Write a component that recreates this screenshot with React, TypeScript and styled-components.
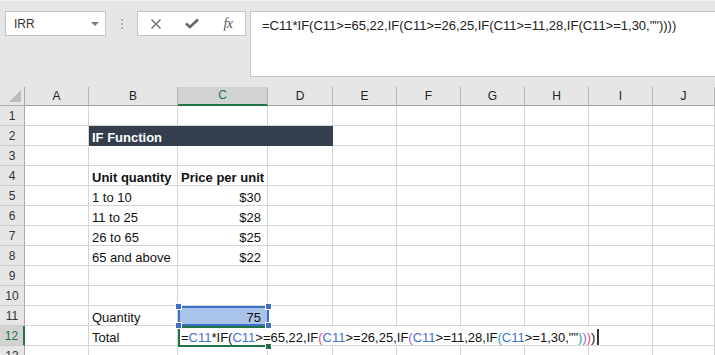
import React from "react"
import styled, { createGlobalStyle } from "styled-components"

const GlobalStyle = createGlobalStyle`
  html, body {
    margin: 0;
    padding: 0;
    background: #e6e6e6;
    overflow: hidden;
  }
  body {
    font-family: "Liberation Sans", Arial, sans-serif;
  }
`

const COL_IDS = ["A", "B", "C", "D", "E", "F", "G", "H", "I", "J"]
const COL_W = [64, 89, 90, 65, 64, 64, 64, 64, 64]
const HEAD_H = 19
const ROW_H = 20
const ROW_COUNT = 13

const colLeft = (i: number) => 25 + COL_W.slice(0, i).reduce((a, b) => a + b, 0)
const rowTop = (r: number) => HEAD_H + (r - 1) * ROW_H

const Page = styled.div`
  width: 715px;
  height: 355px;
  overflow: hidden;
`

const Toolbar = styled.div`
  display: flex;
  align-items: flex-start;
  height: 87px;
  box-sizing: border-box;
  padding: 10px 0 0 5px;
  border-top: 1px solid #f2f2f2;
`

const NameBox = styled.div`
  width: 101px;
  height: 25px;
  box-sizing: border-box;
  background: #fff;
  border: 1px solid #c6c6c6;
  display: flex;
  align-items: center;
  justify-content: space-between;
  padding: 0 6px 0 8px;
  font-size: 12px;
  color: #333;
`

const Caret = styled.span`
  width: 0;
  height: 0;
  border-left: 4px solid transparent;
  border-right: 4px solid transparent;
  border-top: 4px solid #7a7a7a;
`

const Grip = styled.div`
  width: 31px;
  height: 25px;
  display: flex;
  flex-direction: column;
  align-items: center;
  justify-content: center;
  gap: 2px;

  span {
    width: 2px;
    height: 2px;
    background: #b4b4b4;
  }
`

const FxBox = styled.div`
  width: 109px;
  height: 25px;
  box-sizing: border-box;
  background: #fff;
  border: 1px solid #c6c6c6;
  display: grid;
  grid-template-columns: repeat(3, 36px);
  align-items: center;
  justify-items: center;
`

const FxLabel = styled.span`
  font-family: "Liberation Serif", "Times New Roman", serif;
  font-style: italic;
  font-size: 14px;
  color: #555;
  letter-spacing: -0.5px;
`

const FormulaBar = styled.div`
  flex: 1;
  height: 66px;
  margin-left: 4px;
  box-sizing: border-box;
  background: #fff;
  border: 1px solid #c6c6c6;
  border-right: none;
  padding: 6px 0 0 11px;
  font-size: 13px;
  line-height: 16px;
  color: #222;
  white-space: nowrap;
`

const Sheet = styled.div`
  position: relative;
  display: grid;
  grid-template-columns: 25px ${COL_W.map((w) => `${w}px`).join(" ")} 1fr;
  grid-template-rows: ${HEAD_H}px repeat(${ROW_COUNT}, ${ROW_H}px);
  background: #fff;
`

const Corner = styled.div`
  background: #e6e6e6;
  border-right: 1px solid #ababab;
  border-bottom: 1px solid #ababab;
  display: flex;
  align-items: flex-end;
  justify-content: flex-end;
  padding: 0 3px 3px 0;

  &::after {
    content: "";
    width: 0;
    height: 0;
    border-left: 12px solid transparent;
    border-bottom: 12px solid #bcbcbc;
  }
`

const ColHead = styled.div<{ $active?: boolean }>`
  background: ${(p) => (p.$active ? "#d2d2d2" : "#e6e6e6")};
  border-right: 1px solid #b4b4b4;
  border-bottom: ${(p) => (p.$active ? "2px solid #217346" : "1px solid #9f9f9f")};
  color: ${(p) => (p.$active ? "#217346" : "#222")};
  font-size: 12px;
  line-height: ${(p) => (p.$active ? 17 : 18)}px;
  text-align: center;
`

const RowHead = styled.div<{ $active?: boolean }>`
  background: ${(p) => (p.$active ? "#d2d2d2" : "#e6e6e6")};
  border-right: ${(p) => (p.$active ? "2px solid #217346" : "1px solid #ababab")};
  border-bottom: 1px solid #cdcdcd;
  color: ${(p) => (p.$active ? "#217346" : "#333")};
  font-size: 12px;
  line-height: 21px;
  text-align: center;
`

const Cell = styled.div<{
  $span?: number
  $bold?: boolean
  $right?: boolean
  $dark?: boolean
  $fill?: boolean
  $spill?: boolean
}>`
  grid-column: span ${(p) => p.$span || 1};
  box-sizing: border-box;
  display: flex;
  align-items: flex-end;
  justify-content: ${(p) => (p.$right ? "flex-end" : "flex-start")};
  padding: 0 ${(p) => (p.$right ? 6 : 3)}px 0 3px;
  border-right: 1px solid ${(p) => (p.$dark ? "#343e4c" : "#d4d4d4")};
  border-bottom: 1px solid ${(p) => (p.$dark ? "#343e4c" : "#d4d4d4")};
  background: ${(p) => (p.$dark ? "#343e4c" : p.$fill ? "#a9c3ea" : "#fff")};
  color: ${(p) => (p.$dark ? "#fff" : "#111")};
  font-size: 13px;
  font-weight: ${(p) => (p.$bold ? 700 : 400)};
  line-height: 14px;
  white-space: nowrap;
  overflow: ${(p) => (p.$spill ? "visible" : "hidden")};
`

const Ref = styled.span`
  color: #3f70d2;
`

const Paren = styled.span<{ $c: string }>`
  color: ${(p) => p.$c};
`

const Caretline = styled.span`
  display: inline-block;
  width: 2px;
  height: 16px;
  margin-left: 2px;
  background: #333;
  vertical-align: -3px;
`

const RangeBox = styled.div`
  position: absolute;
  box-sizing: border-box;
  border: 2px solid #3c6fc6;
  pointer-events: none;
`

const ActiveBox = styled.div`
  position: absolute;
  box-sizing: border-box;
  border: 2px solid #217346;
  border-right: none;
  pointer-events: none;
`

const Handle = styled.div<{ $green?: boolean }>`
  position: absolute;
  width: 5px;
  height: 5px;
  background: ${(p) => (p.$green ? "#217346" : "#3c6fc6")};
  outline: 1px solid #fff;
`

const PINK = "#de4c86"
const PURPLE = "#a064d8"
const TEAL = "#1ea8a0"

function FormulaText({ colored }: { colored?: boolean }) {
  if (!colored) {
    return <>{'=C11*IF(C11>=65,22,IF(C11>=26,25,IF(C11>=11,28,IF(C11>=1,30,""))))'}</>
  }
  return (
    <>
      =<Ref>C11</Ref>*IF(<Ref>C11</Ref>&gt;=65,22,IF
      <Paren $c={PINK}>(</Paren>
      <Ref>C11</Ref>&gt;=26,25,IF<Paren $c={PURPLE}>(</Paren>
      <Ref>C11</Ref>&gt;=11,28,IF<Paren $c={TEAL}>(</Paren>
      <Ref>C11</Ref>&gt;=1,30,""<Paren $c={TEAL}>)</Paren>
      <Paren $c={PURPLE}>)</Paren>
      <Paren $c={PINK}>)</Paren>)
      <Caretline />
    </>
  )
}

interface CellDef {
  span?: number
  text?: React.ReactNode
  bold?: boolean
  right?: boolean
  dark?: boolean
  fill?: boolean
  spill?: boolean
}

const ROWS: Record<number, CellDef[]> = {
  2: [{}, { span: 3, text: "IF Function", dark: true, bold: true }],
  4: [{}, { text: "Unit quantity", bold: true }, { text: "Price per unit", bold: true }],
  5: [{}, { text: "1 to 10" }, { text: "$30", right: true }],
  6: [{}, { text: "11 to 25" }, { text: "$28", right: true }],
  7: [{}, { text: "26 to 65" }, { text: "$25", right: true }],
  8: [{}, { text: "65 and above" }, { text: "$22", right: true }],
  11: [{}, { text: "Quantity" }, { text: "75", right: true, fill: true }],
  12: [{}, { text: "Total" }, { span: 7, text: <FormulaText colored />, spill: true }],
}

function rowCells(r: number): CellDef[] {
  const defs = [...(ROWS[r] || [])]
  let used = defs.reduce((n, d) => n + (d.span || 1), 0)
  while (used < COL_IDS.length) {
    defs.push({})
    used++
  }
  return defs
}

function CrossIcon() {
  return (
    <svg width="12" height="12" viewBox="0 0 12 12">
      <path d="M1.5 1.5 L10.5 10.5 M10.5 1.5 L1.5 10.5" stroke="#6b6b6b" strokeWidth="1.4" fill="none" />
    </svg>
  )
}

function CheckIcon() {
  return (
    <svg width="14" height="11" viewBox="0 0 14 11">
      <path d="M1 5.5 L5 9 L13 1.5" stroke="#666" strokeWidth="2.6" fill="none" />
    </svg>
  )
}

export default function App() {
  const cLeft = colLeft(2)
  const cRight = colLeft(3)
  return (
    <Page>
      <GlobalStyle />
      <Toolbar>
        <NameBox>
          <span>IRR</span>
          <Caret />
        </NameBox>
        <Grip>
          <span />
          <span />
          <span />
        </Grip>
        <FxBox>
          <CrossIcon />
          <CheckIcon />
          <FxLabel>fx</FxLabel>
        </FxBox>
        <FormulaBar>
          <FormulaText />
        </FormulaBar>
      </Toolbar>
      <Sheet>
        <Corner />
        {COL_IDS.map((id) => (
          <ColHead key={id} $active={id === "C"}>
            {id}
          </ColHead>
        ))}
        {Array.from({ length: ROW_COUNT }, (_, i) => i + 1).map((r) => (
          <React.Fragment key={r}>
            <RowHead $active={r === 12}>{r}</RowHead>
            {rowCells(r).map((c, j) => (
              <Cell
                key={j}
                $span={c.span}
                $bold={c.bold}
                $right={c.right}
                $dark={c.dark}
                $fill={c.fill}
                $spill={c.spill}
              >
                {c.text}
              </Cell>
            ))}
          </React.Fragment>
        ))}
        <RangeBox
          style={{ left: cLeft, top: rowTop(11), width: cRight - cLeft + 1, height: ROW_H }}
        />
        <ActiveBox
          style={{ left: cLeft, top: rowTop(12), width: cRight - cLeft + 1, height: ROW_H + 1 }}
        />
        <Handle style={{ left: cLeft - 2, top: rowTop(11) - 2 }} />
        <Handle style={{ left: cRight - 2, top: rowTop(11) - 2 }} />
        <Handle style={{ left: cLeft - 2, top: rowTop(12) - 3 }} />
        <Handle style={{ left: cRight - 2, top: rowTop(12) - 3 }} />
        <Handle $green style={{ left: cRight - 2, top: rowTop(13) - 2 }} />
      </Sheet>
    </Page>
  )
}
